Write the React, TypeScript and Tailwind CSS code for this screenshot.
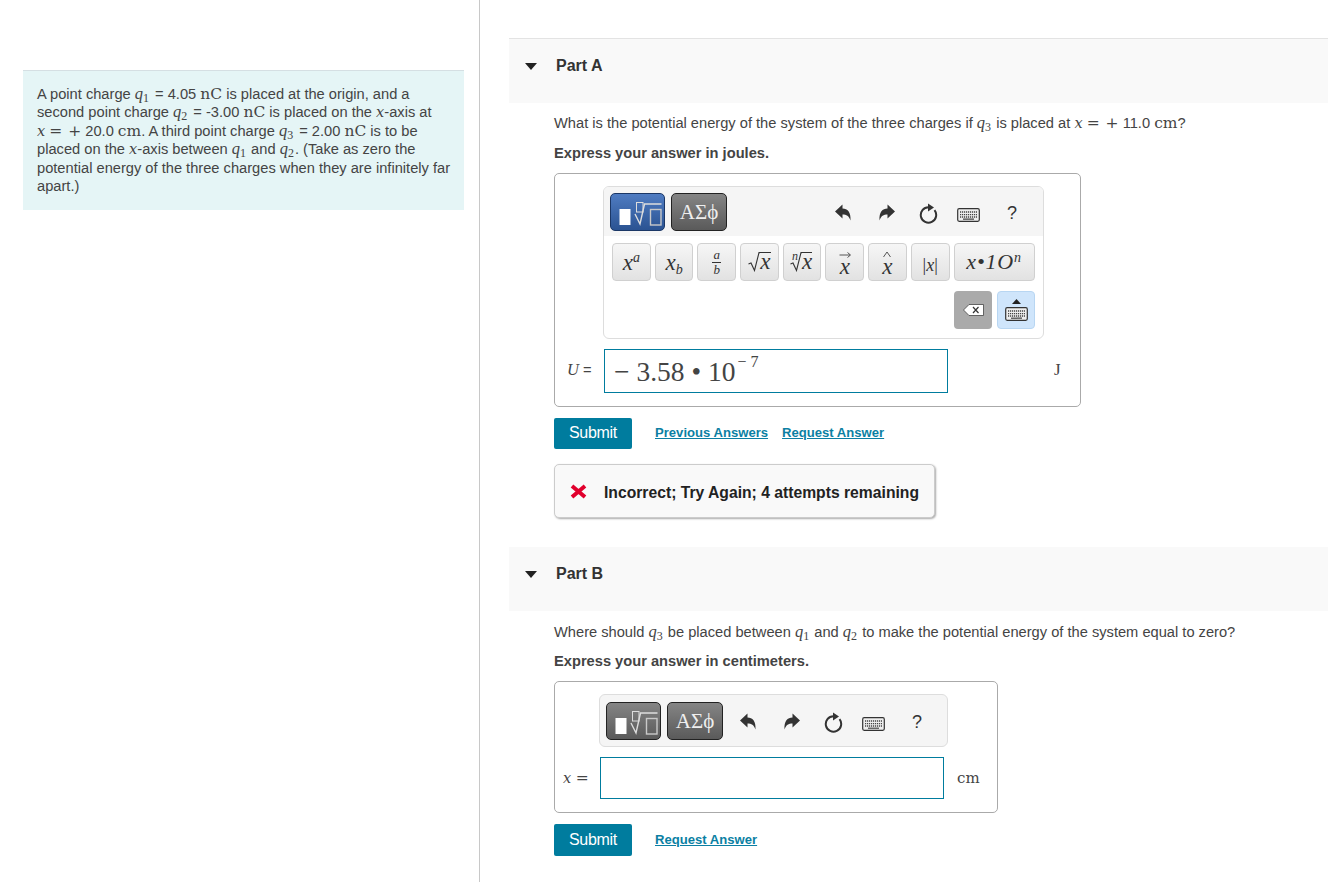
import React from "react";

const sans = "font-['Liberation_Sans',Arial,sans-serif]";

function M({ children }: { children: React.ReactNode }) {
  return <i className="font-['DejaVu_Serif',serif] text-[14.5px] italic leading-[0]">{children}</i>;
}
function R({ children }: { children: React.ReactNode }) {
  return <span className="font-['DejaVu_Serif',serif] text-[15.5px] leading-[0]">{children}</span>;
}
function Q({ n, eq }: { n: number; eq?: boolean }) {
  return (
    <span className={`${eq ? "mr-[6px]" : "mr-[1px]"} font-['Liberation_Serif',serif] text-[16.5px] leading-[0]`}>
      <i>q</i>
      <span className="relative top-[3px] text-[12px] leading-[0]">{n}</span>
    </span>
  );
}

function Undo({ flip }: { flip?: boolean }) {
  return (
    <svg width="16" height="17" viewBox="0 0 16 17" className={flip ? "-scale-x-100" : ""}>
      <path d="M0 7.5 L7.5 0.5 V4.5 C12.5 4.5 16 8 15.5 16.5 C14 12 11.5 10.5 7.5 10.5 V14.5 Z" fill="#333" />
    </svg>
  );
}
function Reload() {
  return (
    <svg width="19" height="21" viewBox="0 0 19 21">
      <path d="M15.5 7.2 A7.7 7.7 0 1 1 9.5 4.3" fill="none" stroke="#333" strokeWidth="2" />
      <path d="M9 0.5 L15 4.5 L9 8.5 Z" fill="#333" />
    </svg>
  );
}
function Keys({ w = 23, h = 14 }: { w?: number; h?: number }) {
  return (
    <svg width={w} height={h} viewBox="0 0 23 14">
      <rect x="0.7" y="0.7" width="21.6" height="12.6" rx="1.5" fill="#eee" stroke="#333" strokeWidth="1.2" />
      <path d="M3 4 H20 M3 6.6 H20 M3 9 H20" stroke="#444" strokeWidth="1.3" strokeDasharray="1.2 0.8" />
      <path d="M6 11.2 H17" stroke="#444" strokeWidth="1.2" />
    </svg>
  );
}
function ToolIcons({ first }: { first: string }) {
  return (
    <div className={`flex items-center ${first}`}>
      <div className="mt-[1px] flex w-[20px] justify-center"><Undo /></div>
      <div className="ml-[24px] mt-[1px] flex w-[20px] justify-center"><Undo flip /></div>
      <div className="ml-[21px] mt-[3px] flex w-[20px] justify-center"><Reload /></div>
      <div className="ml-[18px] mt-[6px] flex w-[24px] justify-center"><Keys /></div>
      <div className={`ml-[22px] mt-[3px] flex w-[20px] justify-center text-[18px] leading-none text-[#333] ${sans}`}>?</div>
    </div>
  );
}
function ModeButtons({ blue }: { blue?: boolean }) {
  return (
    <>
      <div
        className={`h-[38px] w-[55px] rounded-[5px] border ${
          blue
            ? "border-[#1b3766] bg-gradient-to-b from-[#4f7cc2] to-[#2b5392]"
            : "border-[#222] bg-gradient-to-b from-[#858585] to-[#5a5a5a]"
        }`}
      >
        <svg width="53" height="36" viewBox="0 0 53 36">
          <rect x="8.5" y="15" width="11" height="16" fill="#fff" />
          <rect x="25.5" y="8.5" width="6.5" height="9.5" fill="none" stroke="#ddd" />
          <path d="M24 20 L29 30 L33.5 10 H50.5" fill="none" stroke="#ddd" strokeWidth="1.4" />
          <rect x="39.5" y="15.5" width="10.5" height="15.5" fill="none" stroke="#c9c9c9" strokeWidth="1.4" />
        </svg>
      </div>
      <div className="ml-[6px] flex h-[38px] w-[56px] items-center justify-center rounded-[5px] border border-[#222] bg-gradient-to-b from-[#858585] to-[#5a5a5a] pt-[3px] font-['Liberation_Serif',serif] text-[21px] text-[#eee]">
        ΑΣϕ
      </div>
    </>
  );
}
function Key({ children, wide }: { children: React.ReactNode; wide?: boolean }) {
  return (
    <div
      className={`flex h-[38px] ${wide ? "w-[81px]" : "w-[38.7px]"} items-center justify-center rounded-[4px] border border-[#d0d0d0] bg-gradient-to-b from-[#f6f6f6] to-[#e2e2e2] font-['Liberation_Serif',serif] text-[#333]`}
    >
      {children}
    </div>
  );
}
function Root({ n }: { n?: boolean }) {
  return (
    <span className="flex items-start">
      {n && <i className="mr-[-8px] mt-[-2px] text-[12px] leading-none">n</i>}
      <svg width="12" height="20" viewBox="0 0 12 20">
        <path d="M0.5 12 L3 11 L6.5 18.5 L11 0.6 H12" fill="none" stroke="#333" strokeWidth="1.1" />
      </svg>
      <i className="border-t border-[#333] text-[23px] leading-[18px]">x</i>
    </span>
  );
}
function Arrowed({ hat }: { hat?: boolean }) {
  return (
    <span className="flex flex-col items-center">
      <svg width="12" height="9" viewBox="0 0 12 9">
        {hat ? (
          <path d="M2.5 7 L6 2 L9.5 7" fill="none" stroke="#444" strokeWidth="0.9" />
        ) : (
          <path d="M0.5 5 H11 M8.5 2.5 L11.5 5 L8.5 7.5" fill="none" stroke="#444" strokeWidth="0.9" />
        )}
      </svg>
      <i className="text-[23px] leading-[15px]">x</i>
    </span>
  );
}
function Header({ title }: { title: string }) {
  return (
    <div className="flex h-[64px] items-start bg-[#f9f9f9] pl-[16px] pt-[17px]">
      <svg width="12" height="7" viewBox="0 0 12 7" className="mt-[7px]">
        <path d="M0 0 H12 L6 7 Z" fill="#222" />
      </svg>
      <span className="ml-[19px] text-[16px] font-bold leading-[20px] text-[#333]">{title}</span>
    </div>
  );
}
function Submit({ tall }: { tall?: boolean }) {
  return (
    <div className={`flex ${tall ? "h-[32px]" : "h-[31px] pb-[2px]"} w-[78px] items-center justify-center rounded-[2px] bg-[#007c9e] text-[16px] tracking-[-0.3px] text-white`}>
      Submit
    </div>
  );
}
function A({ children, cls }: { children: React.ReactNode; cls?: string }) {
  return <span className={`text-[13.1px] font-bold text-[#0b7fa3] underline ${cls ?? ""}`}>{children}</span>;
}

export default function App() {
  return (
    <div className={`flex h-[882px] w-[1328px] overflow-hidden bg-white text-[#444] ${sans}`}>
      <div className="h-full w-[480px] shrink-0 border-r border-[#c8c8c8] pl-[23px] pt-[70px]">
        <div className="h-[140px] w-[441px] border-t border-[#d5dfe3] bg-[#e5f5f6] pl-[14px] pt-[14px] text-[14.67px] leading-[18.4px] whitespace-nowrap">
          A point charge <Q n={1} eq />= 4.05 <R>nC</R> is placed at the origin, and a<br />
          second point charge <Q n={2} eq />= -3.00 <R>nC</R> is placed on the <M>x</M>-axis at<br />
          <M>x</M> <R>= <span className="ml-[1px]">+</span></R> 20.0 <R>cm</R>. A third point charge <Q n={3} eq />= 2.00 <R>nC</R> is to be<br />
          placed on the <M>x</M>-axis between <Q n={1} /> and <Q n={2} />. (Take as zero the<br />
          potential energy of the three charges when they are infinitely far<br />
          apart.)
        </div>
      </div>

      <div className="min-w-0 flex-1 pl-[29px] pt-[38px]">
        <div className="border-t border-[#e3e3e3]">
          <Header title="Part A" />
        </div>
        <div className="pl-[45px]">
          <p className="mt-[10px] h-[20px] whitespace-nowrap text-[14.67px] leading-[20px]">
            What is the potential energy of the system of the three charges if <Q n={3} /> is placed at <M>x</M> <R>= <span className="ml-[1px]">+</span></R> 11.0 <R>cm</R>?
          </p>
          <p className="mt-[10px] h-[20px] text-[14.67px] font-bold leading-[20px] text-[#444]">Express your answer in joules.</p>

          <div className="mt-[10px] h-[234px] w-[527px] rounded-[5px] border border-[#aaa] pl-[48px] pt-[12px]">
            <div className="h-[153px] w-[441px] overflow-hidden rounded-[6px] border border-[#ddd]">
              <div className="flex h-[49px] items-center bg-[#f5f5f5] pl-[6px]">
                <ModeButtons blue />
                <ToolIcons first="ml-[106px]" />
              </div>
              <div className="flex gap-[4px] pl-[8px] pt-[7px]">
                <Key><span className="text-[23px] italic leading-none">x<span className="relative -top-[8px] text-[14px]">a</span></span></Key>
                <Key><span className="text-[23px] italic leading-none">x<span className="relative top-[4px] text-[14px]">b</span></span></Key>
                <Key>
                  <span className="flex flex-col items-center text-[13px] italic leading-[14px]">
                    <span className="border-b border-[#333] px-[1px]">a</span>
                    <span>b</span>
                  </span>
                </Key>
                <Key><Root /></Key>
                <Key><Root n /></Key>
                <Key><Arrowed /></Key>
                <Key><Arrowed hat /></Key>
                <Key><span className="pt-[6px] text-[18px] leading-none">|<i>x</i>|</span></Key>
                <Key wide><span className="text-[22px] italic leading-none tracking-[0.8px]">x•1O<span className="relative -top-[7px] text-[14px]">n</span></span></Key>
              </div>
              <div className="flex justify-end gap-[5px] pr-[8px] pt-[10px]">
                <div className="flex h-[38px] w-[38px] items-center justify-center rounded-[4px] bg-[#aaa]">
                  <svg width="21" height="12" viewBox="0 0 21 12">
                    <path d="M0.5 6 L6 0.5 H20.5 V11.5 H6 Z" fill="#fff" stroke="#444" strokeWidth="0.8" />
                    <path d="M10 3 L15.5 9 M15.5 3 L10 9" stroke="#333" strokeWidth="1.2" />
                  </svg>
                </div>
                <div className="flex h-[38px] w-[38px] flex-col items-center justify-center gap-[3px] rounded-[4px] border border-[#b8d6f2] bg-[#cfe5fb]">
                  <svg width="9" height="5" viewBox="0 0 9 5"><path d="M0 5 L4.5 0 L9 5 Z" fill="#222" /></svg>
                  <Keys />
                </div>
              </div>
            </div>
            <div className="mt-[10px] flex h-[44px] items-center">
              <span className="mb-[2px] ml-[-36px] w-[37px] whitespace-nowrap text-[14.67px]"><i className="font-['Liberation_Serif',serif] text-[16.5px]">U</i> =</span>
              <div className="flex h-[44px] w-[344px] items-center border border-[#007c9e] pl-[9px] pt-[2px] font-['Liberation_Serif',serif] text-[27.5px] leading-none text-[#444]">
                − 3.58 • 10
                <span className="relative -top-[10px] ml-[2px] text-[16px]">− 7</span>
              </div>
              <span className="mb-[3px] ml-[106px] font-['Liberation_Serif',serif] text-[17px]">J</span>
            </div>
          </div>

          <div className="mt-[11px] flex items-center">
            <Submit />
            <A cls="mb-[2px] ml-[23px]">Previous Answers</A>
            <A cls="mb-[2px] ml-[14px]">Request Answer</A>
          </div>

          <div className="mt-[15px] flex h-[54px] w-[381px] items-center rounded-[5px] border border-[#ccc] bg-[#f9f9f9] pl-[15px] shadow-[1px_1px_2px_#aaa]">
            <svg width="17" height="15" viewBox="0 0 17 15">
              <path d="M2 2 L15 13 M15 2 L2 13" stroke="#e1002d" strokeWidth="4" />
            </svg>
            <span className="ml-[17px] mt-[3px] whitespace-nowrap text-[15.7px] font-bold leading-none text-[#222]">Incorrect; Try Again; 4 attempts remaining</span>
          </div>
        </div>

        <div className="mt-[29px]">
          <Header title="Part B" />
        </div>
        <div className="pl-[45px]">
          <p className="mt-[11px] h-[20px] whitespace-nowrap text-[14.67px] leading-[20px]">
            Where should <Q n={3} /> be placed between <Q n={1} /> and <Q n={2} /> to make the potential energy of the system equal to zero?
          </p>
          <p className="mt-[9px] h-[20px] text-[14.67px] font-bold leading-[20px]">Express your answer in centimeters.</p>

          <div className="mt-[10px] h-[132px] w-[444px] rounded-[5px] border border-[#aaa] pl-[44px] pt-[12px]">
            <div className="flex h-[53px] w-[349px] items-center rounded-[6px] border border-[#ddd] bg-[#f5f5f5] pl-[6px]">
              <ModeButtons />
              <ToolIcons first="ml-[15px]" />
            </div>
            <div className="mt-[10px] flex h-[42px] items-center">
              <span className="ml-[-36px] w-[37px] whitespace-nowrap"><M>x</M> <R>=</R></span>
              <div className="h-[42px] w-[344px] border border-[#007c9e]" />
              <span className="ml-[13px] font-['DejaVu_Serif',serif] text-[15px]">cm</span>
            </div>
          </div>

          <div className="mt-[11px] flex items-center">
            <Submit tall />
            <A cls="ml-[23px]">Request Answer</A>
          </div>
        </div>
      </div>
    </div>
  );
}
